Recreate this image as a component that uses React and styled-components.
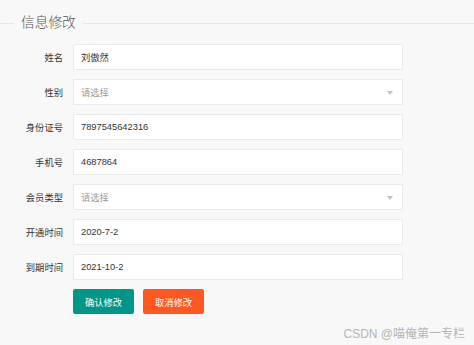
import React from "react";
import styled, { createGlobalStyle } from "styled-components";

const Global = createGlobalStyle`
  html, body { margin: 0; padding: 0; }
  body {
    background: #f8f8f8;
    font-family: "Liberation Sans", "Noto Sans CJK SC", sans-serif;
    color: #333;
  }
  * { box-sizing: border-box; }
`;

const Page = styled.div`
  position: relative;
  width: 474px;
  height: 345px;
  padding-top: 14px;
  overflow: hidden;
`;

const Field = styled.fieldset`
  margin: 0;
  padding: 0;
  border: 0;
  border-top: 1px solid #e6e6e6;
`;

const Legend = styled.legend`
  margin-left: 14px;
  padding: 0 7px;
  font-size: 13.7px;
  line-height: 18px;
  font-weight: 300;
  color: #555;
`;

const Form = styled.div`
  display: flex;
  flex-direction: column;
  gap: 9px;
  padding-top: 12px;
`;

const Row = styled.div`
  display: flex;
  align-items: center;
  height: 26px;
`;

const Label = styled.div`
  width: 73px;
  padding-right: 10px;
  text-align: right;
  font-size: 9.3px;
  color: #333;
`;

const Box = styled.div`
  position: relative;
  width: 330px;
  height: 26px;
  background: #fff;
  border: 1px solid #eaeaea;
  border-radius: 1px;
  padding: 0 7px;
  display: flex;
  align-items: center;
  font-size: 9.3px;
  color: ${(p) => (p.$placeholder ? "#9a9a9a" : "#333")};
`;

const Arrow = styled.span`
  position: absolute;
  right: 9px;
  top: 11px;
  width: 0;
  height: 0;
  border-left: 3.5px solid transparent;
  border-right: 3.5px solid transparent;
  border-top: 4px solid #c2c2c2;
`;

const Actions = styled.div`
  display: flex;
  gap: 9px;
  padding-left: 73px;
`;

const Button = styled.button`
  width: 61px;
  height: 25px;
  border: 0;
  border-radius: 2px;
  background: ${(p) => p.$bg};
  color: #fff;
  font-family: inherit;
  font-size: 9.3px;
  padding: 0;
  cursor: pointer;
`;

const Watermark = styled.div`
  position: absolute;
  right: 9px;
  bottom: 4px;
  font-size: 12px;
  color: #b5b5b5;
  white-space: nowrap;
`;

const fields = [
  { label: "姓名", value: "刘傲然" },
  { label: "性别", value: "请选择", select: true },
  { label: "身份证号", value: "7897545642316" },
  { label: "手机号", value: "4687864" },
  { label: "会员类型", value: "请选择", select: true },
  { label: "开通时间", value: "2020-7-2" },
  { label: "到期时间", value: "2021-10-2" },
];

export default function App() {
  return (
    <Page>
      <Global />
      <Field>
        <Legend>信息修改</Legend>
        <Form>
          {fields.map((f) => (
            <Row key={f.label}>
              <Label>{f.label}</Label>
              <Box $placeholder={f.select}>
                {f.value}
                {f.select && <Arrow />}
              </Box>
            </Row>
          ))}
          <Actions>
            <Button $bg="#009688">确认修改</Button>
            <Button $bg="#ff5722">取消修改</Button>
          </Actions>
        </Form>
      </Field>
      <Watermark>CSDN @喵俺第一专栏</Watermark>
    </Page>
  );
}
